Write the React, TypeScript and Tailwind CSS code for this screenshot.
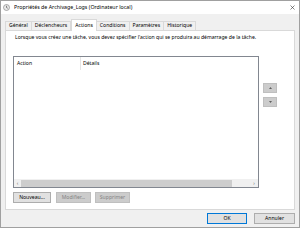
const font = { fontFamily: '"Noto Sans", "Open Sans", Arial, sans-serif' };

function Tab({ label, active }: { label: string; active?: boolean }) {
  if (active) {
    return (
      <div className="relative z-10 -mb-px flex h-[12px] items-center border border-b-0 border-[#d9d9d9] bg-white px-[3px] text-[5.1px] leading-none text-black">
        {label}
      </div>
    );
  }
  return (
    <div className="-ml-px flex h-[9px] items-center border border-b-0 border-[#d9d9d9] bg-[#f0f0f0] px-[3px] text-[5.1px] leading-none text-black first:ml-0">
      {label}
    </div>
  );
}

function Button({
  label,
  width,
  disabled,
  primary,
}: {
  label: string;
  width: string;
  disabled?: boolean;
  primary?: boolean;
}) {
  const tone = disabled
    ? 'border-[#bfbfbf] bg-[#cccccc] text-[#838383]'
    : primary
      ? 'border-[#0078d7] bg-[#e1e1e1] text-black'
      : 'border-[#adadad] bg-[#e1e1e1] text-black';
  return (
    <div
      className={`flex h-[11px] items-center justify-center border text-[5.1px] leading-none ${width} ${tone}`}
    >
      {label}
    </div>
  );
}

function ArrowButton({ up }: { up?: boolean }) {
  return (
    <div className="flex h-[10px] w-[14px] items-center justify-center border border-[#bfbfbf] bg-[#cccccc]">
      <svg width="3" height="2" viewBox="0 0 3 2">
        {up ? <path d="M0 2 L1.5 0 L3 2 Z" fill="#606060" /> : <path d="M0 0 L3 0 L1.5 2 Z" fill="#606060" />}
      </svg>
    </div>
  );
}

export default function App() {
  return (
    <div
      className="flex h-[228px] w-[300px] flex-col border border-[#a0a0a0] bg-[#f0f0f0]"
      style={font}
    >
      {/* title bar */}
      <div className="flex h-[13px] shrink-0 items-center bg-white pl-[2px] pr-[4px]">
        <svg width="7" height="7" viewBox="0 0 14 14" className="shrink-0">
          <circle cx="7" cy="7" r="6" fill="#e8e8e8" stroke="#8a8a8a" strokeWidth="1.4" />
          <path d="M7 3.5 V7 L9.5 8.5" stroke="#555" strokeWidth="1.4" fill="none" />
        </svg>
        <span className="ml-[4px] text-[5.3px] leading-none text-black">
          Propriétés de Archivage_Logs (Ordinateur local)
        </span>
        <svg width="5" height="5" viewBox="0 0 10 10" className="ml-auto shrink-0">
          <path d="M1 1 L9 9 M9 1 L1 9" stroke="#333" strokeWidth="1.2" />
        </svg>
      </div>

      {/* tabs */}
      <div className="flex h-[16px] shrink-0 items-end px-[4px]">
        <Tab label="Général" />
        <Tab label="Déclencheurs" />
        <Tab label="Actions" active />
        <Tab label="Conditions" />
        <Tab label="Paramètres" />
        <Tab label="Historique" />
      </div>

      {/* panel */}
      <div className="mx-[4px] flex h-[180px] shrink-0 flex-col border border-[#d9d9d9] bg-white pl-[7px]">
        <p className="mt-[3px] ml-[2px] text-[5.1px] leading-[7px] text-black">
          Lorsque vous créez une tâche, vous devez spécifier l'action qui se produira au démarrage de la tâche.
        </p>

        <div className="mt-[15px] flex">
          <div className="flex h-[132px] w-[246px] flex-col border border-[#828790] bg-white">
            <div className="flex h-[13px] text-[5.1px] leading-none text-black">
              <div className="flex w-[67px] items-center border-r border-[#e5e5e5] pl-[3px]">Action</div>
              <div className="flex items-center pl-[2px]">Détails</div>
            </div>
            <div className="flex-1" />
            <div className="flex h-[8px] items-center bg-[#f0f0f0]">
              <div className="flex w-[7px] items-center justify-center text-[5px] leading-none text-[#606060]">‹</div>
              <div className="h-[7px] w-[211px] bg-[#cdcdcd]" />
              <div className="flex-1" />
              <div className="flex w-[8px] items-center justify-center text-[5px] leading-none text-[#606060]">›</div>
            </div>
          </div>

          <div className="ml-[4px] mt-[27px] flex flex-col gap-[4px]">
            <ArrowButton up />
            <ArrowButton />
          </div>
        </div>

        <div className="mt-[4px] flex gap-[4px]">
          <Button label="Nouveau..." width="w-[38px]" />
          <Button label="Modifier..." width="w-[35px] ml-[1px]" disabled />
          <Button label="Supprimer" width="w-[35px]" disabled />
        </div>
      </div>

      {/* footer */}
      <div className="flex justify-end gap-[7px] px-[4px] pt-[3px]">
        <Button label="OK" width="w-[40px]" primary />
        <Button label="Annuler" width="w-[41px]" />
      </div>
    </div>
  );
}
